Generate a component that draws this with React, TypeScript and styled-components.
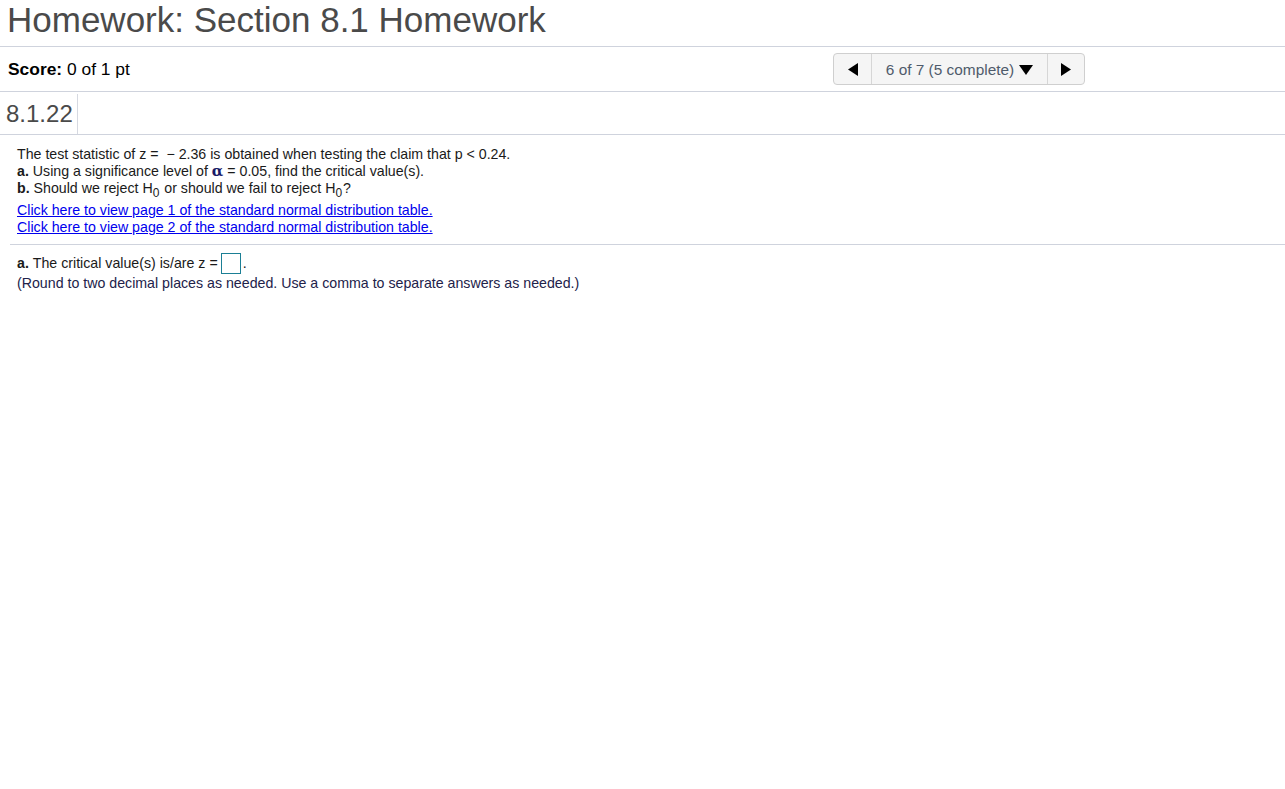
import React from "react";
import styled, { createGlobalStyle } from "styled-components";

const Global = createGlobalStyle`
  html, body { margin: 0; padding: 0; background: #fff; }
  body { font-family: "Liberation Sans", Arial, sans-serif; }
`;

const Page = styled.div`
  width: 1285px;
`;

const Title = styled.h1`
  margin: 0;
  height: 47px;
  box-sizing: border-box;
  padding: 0 0 0 7px;
  font-size: 35px;
  font-weight: normal;
  line-height: 40px;
  color: #4a4a4a;
  border-bottom: 1px solid #cfd3dd;
  white-space: nowrap;
`;

const ScoreBar = styled.div`
  height: 45px;
  box-sizing: border-box;
  display: flex;
  align-items: center;
  justify-content: space-between;
  padding: 0 200px 0 8px;
  border-bottom: 1px solid #cfd3dd;
`;

const Score = styled.div`
  font-size: 17.4px;
  color: #000;
  b { font-weight: bold; }
`;

const Pager = styled.div`
  display: flex;
  height: 32px;
  box-sizing: border-box;
  border: 1px solid #cfcfcf;
  border-radius: 4px;
  background: #f5f5f5;
  overflow: hidden;
`;

const PagerBtn = styled.div<{ $w: number; $divider?: "left" | "right" }>`
  width: ${(p) => p.$w}px;
  display: flex;
  align-items: center;
  justify-content: center;
  gap: 5px;
  padding-top: 1px;
  font-size: 15.4px;
  color: #4f5b6b;
  box-sizing: border-box;
  ${(p) => (p.$divider === "left" ? "border-left: 1px solid #d6d6d6;" : "")}
  ${(p) => (p.$divider === "right" ? "border-right: 1px solid #d6d6d6;" : "")}
`;

const Tri = styled.svg`
  display: block;
`;

const IdRow = styled.div`
  height: 43px;
  box-sizing: border-box;
  display: flex;
  border-bottom: 1px solid #cfd3dd;
`;

const IdCell = styled.div`
  margin-top: 2px;
  padding: 6px 4px 0 6px;
  font-size: 24px;
  color: #4a4a4a;
  border-right: 1px solid #d6d9e1;
  line-height: 28px;
`;

const Body = styled.div`
  padding: 11px 0 0 17px;
  font-size: 14.2px;
  color: #1a1a1a;
  line-height: 17px;
`;

const Line = styled.div`
  white-space: nowrap;
`;

const Links = styled.div`
  margin-top: 5px;
  padding-bottom: 8px;
`;

const Link = styled.a`
  display: block;
  color: #0000ee;
  text-decoration: underline;
  line-height: 17px;
  cursor: pointer;
`;

const Divider = styled.hr`
  margin: 0 0 0 -7px;
  border: none;
  border-top: 1px solid #cfd3dd;
`;

const Answer = styled.div`
  padding-top: 8px;
  display: flex;
  align-items: center;
  white-space: nowrap;
`;

const Box = styled.span`
  display: inline-block;
  width: 18px;
  height: 19px;
  border: 1px solid #1b7f95;
  margin: 0 2px 0 3px;
`;

const Hint = styled.div`
  margin-top: 1px;
  color: #22224a;
  white-space: nowrap;
`;

const Alpha = styled.span`
  font-family: "DejaVu Serif", "Liberation Serif", serif;
  font-size: 15px;
  font-weight: bold;
  color: #1a1a66;
`;

const Sub = styled.sub`
  font-size: 12px;
  vertical-align: -4px;
  line-height: 0;
  margin-right: 1px;
`;

const Left = () => (
  <Tri width="10" height="13" viewBox="0 0 10 13">
    <polygon points="10,0 10,13 0,6.5" fill="#000" />
  </Tri>
);
const Right = () => (
  <Tri width="10" height="13" viewBox="0 0 10 13">
    <polygon points="0,0 0,13 10,6.5" fill="#000" />
  </Tri>
);
const Down = () => (
  <Tri width="14" height="10" viewBox="0 0 14 10">
    <polygon points="0,0 14,0 7,10" fill="#000" />
  </Tri>
);

export default function App() {
  return (
    <Page>
      <Global />
      <Title>Homework: Section 8.1 Homework</Title>
      <ScoreBar>
        <Score>
          <b>Score:</b> 0 of 1 pt
        </Score>
        <Pager>
          <PagerBtn $w={38} $divider="right">
            <Left />
          </PagerBtn>
          <PagerBtn $w={175}>
            6 of 7 (5 complete) <Down />
          </PagerBtn>
          <PagerBtn $w={37} $divider="left">
            <Right />
          </PagerBtn>
        </Pager>
      </ScoreBar>
      <IdRow>
        <IdCell>8.1.22</IdCell>
      </IdRow>
      <Body>
        <Line>
          The test statistic of z =&nbsp; − 2.36 is obtained when testing the claim that p &lt; 0.24.
        </Line>
        <Line>
          <b>a.</b> Using a significance level of <Alpha>α</Alpha> = 0.05, find the critical value(s).
        </Line>
        <Line>
          <b>b.</b> Should we reject H<Sub>0</Sub> or should we fail to reject H<Sub>0</Sub>?
        </Line>
        <Links>
          <Link>Click here to view page 1 of the standard normal distribution table.</Link>
          <Link>Click here to view page 2 of the standard normal distribution table.</Link>
        </Links>
        <Divider />
        <Answer>
          <b>a.</b>&nbsp;The critical value(s) is/are z =<Box />.
        </Answer>
        <Hint>(Round to two decimal places as needed. Use a comma to separate answers as needed.)</Hint>
      </Body>
    </Page>
  );
}
